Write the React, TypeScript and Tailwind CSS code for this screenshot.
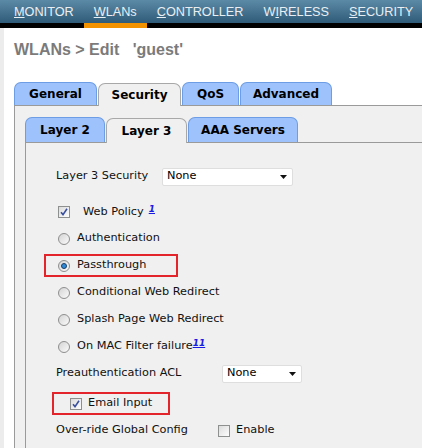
const navItems = [
  { first: "M", rest: "ONITOR" },
  { first: "W", rest: "LANs", active: true },
  { first: "C", rest: "ONTROLLER" },
  { pre: "W", first: "I", rest: "RELESS" },
  { first: "S", rest: "ECURITY" },
];

function Tab({ label, width, active, height }: { label: string; width: number; active?: boolean; height: number }) {
  return (
    <div
      style={{ width, height }}
      className={
        "flex items-center justify-center rounded-t-[7px] border border-b-0 text-[12px] font-bold text-black " +
        (active
          ? "relative z-10 -mb-px bg-[#f0f0f0] border-[#a8a8a8]"
          : "bg-[#9ec2fc] border-[#6d9de4]")
      }
    >
      {label}
    </div>
  );
}

function Radio({ checked }: { checked?: boolean }) {
  return (
    <span className="flex h-[12px] w-[12px] shrink-0 items-center justify-center rounded-full border border-[#8e8e8e] bg-gradient-to-br from-[#d4d4d4] to-[#fbfbfb]">
      {checked ? <span className="h-[6px] w-[6px] rounded-full border border-[#1b3f66] bg-[#2f8ad8]" /> : null}
    </span>
  );
}

function Checkbox({ checked }: { checked?: boolean }) {
  return (
    <span className="flex h-[12px] w-[12px] shrink-0 items-center justify-center border border-[#8e8f8f] bg-gradient-to-br from-[#dcdcdc] to-[#fdfdfd]">
      {checked ? (
        <svg width="8" height="8" viewBox="0 0 8 8">
          <path d="M1 4.2 L3 6.6 L7 0.8" fill="none" stroke="#3a4f9e" strokeWidth="1.6" />
        </svg>
      ) : null}
    </span>
  );
}

function Select({ width }: { width: number }) {
  return (
    <div
      style={{ width }}
      className="flex h-[18px] items-center justify-between rounded-[2px] border border-[#dedede] bg-white pl-[4px] pr-[5px] text-[11.3px] text-black"
    >
      <span>None</span>
      <svg width="7" height="4" viewBox="0 0 7 4">
        <path d="M0 0 H7 L3.5 4 Z" fill="#111" />
      </svg>
    </div>
  );
}

function Sup({ n }: { n: string }) {
  return <sup className="relative -top-[3px] text-[9px] font-bold italic text-[#1a1ae6] underline">{n}</sup>;
}

export default function App() {
  return (
    <div className="flex h-[448px] w-[422px] flex-col overflow-hidden bg-white font-['DejaVu_Sans',sans-serif]">
      <nav className="flex h-[28px] shrink-0 bg-[linear-gradient(to_bottom,#5b8aa7,#2f5b78_23px,#000_23px)] pl-[4px] font-['Liberation_Sans',Arial,sans-serif] text-[12.7px] text-[#e9eff3]">
        {navItems.map((item) => (
          <div
            key={item.rest}
            className={
              "flex h-[28px] items-center border-b-[5px] px-[10px] pt-[2px] " +
              (item.active ? "border-[#f39200]" : "border-transparent")
            }
          >
            {item.pre}
            <span className="underline">{item.first}</span>
            {item.rest}
          </div>
        ))}
      </nav>

      <div className="flex flex-1">
        <div className="w-[4px] bg-[#ececec]" />
        <main className="flex flex-1 flex-col pl-[10px]">
          <h1 className="mt-[12px] whitespace-pre font-['Liberation_Sans',Arial,sans-serif] text-[16px] font-bold leading-[20px] text-[#7b7b7b]">
            {"WLANs > Edit   'guest'"}
          </h1>

          <div className="mt-[22px] flex items-end gap-[1px]">
            <Tab label="General" width={83} height={23} />
            <Tab label="Security" width={83} height={23} active />
            <Tab label="QoS" width={57} height={23} />
            <Tab label="Advanced" width={92} height={23} />
          </div>

          <section className="flex flex-1 flex-col border-l border-t border-[#9a9a9a] bg-[#f0f0f0] pl-[10px] pt-[11px]">
            <div className="flex items-end gap-[1px]">
              <Tab label="Layer 2" width={80} height={25} />
              <Tab label="Layer 3" width={81} height={25} active />
              <Tab label="AAA Servers" width={110} height={25} />
            </div>

            <div className="flex flex-1 flex-col border-l border-t border-[#9a9a9a] pl-[30px] pt-[20px] text-[11.3px] text-[#111]">
              <div className="flex h-[27px] items-center">
                <span className="w-[106px]">Layer 3 Security</span>
                <Select width={131} />
              </div>

              <div className="mt-[9px] flex h-[26px] items-center pl-[2px]">
                <Checkbox checked />
                <span className="ml-[13px]">Web Policy</span>
                <span className="ml-[5px]">
                  <Sup n="1" />
                </span>
              </div>

              <div className="flex h-[27px] items-center gap-[7px] pl-[2px]">
                <Radio />
                <span>Authentication</span>
              </div>

              <div className="flex h-[27px] items-center">
                <div className="-ml-[12px] flex h-[23px] w-[134px] items-center gap-[7px] border-2 border-[#e3242b] pl-[12px]">
                  <Radio checked />
                  <span>Passthrough</span>
                </div>
              </div>

              <div className="flex h-[27px] items-center gap-[7px] pl-[2px]">
                <Radio />
                <span>Conditional Web Redirect</span>
              </div>

              <div className="flex h-[27px] items-center gap-[7px] pl-[2px]">
                <Radio />
                <span>Splash Page Web Redirect</span>
              </div>

              <div className="flex h-[27px] items-center gap-[7px] pl-[2px]">
                <Radio />
                <span>
                  On MAC Filter failure
                  <Sup n="11" />
                </span>
              </div>

              <div className="flex h-[27px] items-center">
                <span className="w-[166px]">Preauthentication ACL</span>
                <Select width={80} />
              </div>

              <div className="mt-[3px] flex h-[27px] items-center">
                <div className="-ml-[4px] flex h-[23px] w-[118px] items-center gap-[6px] border-2 border-[#e3242b] pl-[16px]">
                  <Checkbox checked />
                  <span>Email Input</span>
                </div>
              </div>

              <div className="flex h-[27px] items-center">
                <span className="w-[162px]">Over-ride Global Config</span>
                <Checkbox />
                <span className="ml-[6px]">Enable</span>
              </div>
            </div>
          </section>
        </main>
      </div>
    </div>
  );
}
